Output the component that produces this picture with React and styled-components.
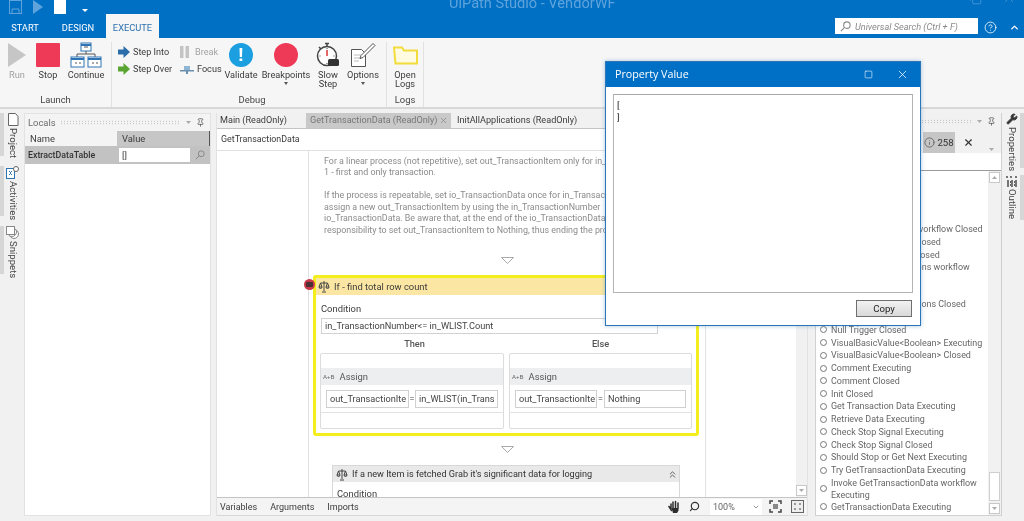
import React from 'react';
import styled, { createGlobalStyle } from 'styled-components';
import { Search, X, Wrench, Pin, ChevronsUp, Info, CircleHelp, ChevronUp, ChevronDown, Minus, Copy, Square } from 'lucide-react';

const Global = createGlobalStyle`
  html, body { margin: 0; padding: 0; background: #f1f1f1; }
  * { box-sizing: border-box; }
  body { font-family: Roboto, "Open Sans", sans-serif; font-size: 9.4px; color: #3c3c3c; }
  svg { flex: none; }
`;

const Page = styled.div`
  position: relative; width: 1024px; height: 521px; overflow: hidden;
  display: flex; flex-direction: column; background: #f1f1f1; filter: blur(0.25px);
`;
const Head = styled.header`background: #0070c4; height: 38px; display: flex; flex-direction: column; flex: none;`;
const TitleRow = styled.div`height: 14px; overflow: hidden; display: flex; align-items: flex-end;`;
const Quick = styled.div`display: flex; align-items: flex-end; height: 14px; width: 449px; flex: none; padding-left: 9px; gap: 11px; margin-top: -6px;`;
const Title = styled.div`font-size: 14.6px; line-height: 18px; height: 14px; margin-top: -6px; color: #5ea3dc; align-self: flex-start; white-space: nowrap;`;
const WinBtns = styled.div`display: flex; gap: 20px; color: #5ea3dc; align-self: flex-start; margin: -9px 8px 0 auto;`;
const TabRow = styled.div`height: 24px; display: flex; align-items: stretch;`;
const HeadTab = styled.div`
  font-size: 9.3px; line-height: 24px; padding-top: 2px; text-align: center; width: ${p => p.$w}px;
  height: 24px; color: ${p => (p.$active ? '#2a70ad' : '#fff')}; background: ${p => (p.$active ? '#f6f6f6' : 'transparent')};
`;
const SearchBox = styled.div`
  margin-left: auto; margin-top: 4px; width: 143px; height: 16px; background: #fff; display: flex; align-items: center; gap: 4px;
  padding-left: 5px; color: #8a8a8a; font-style: italic; font-size: 9.2px; white-space: nowrap;
`;
const HeadTools = styled.div`display: flex; width: 46px; align-items: center; justify-content: space-between; padding: 3px 4px 0 6px; color: #fff; height: 24px;`;

const Ribbon = styled.section`height: 69px; flex: none; background: #f6f6f6; display: flex;`;
const Group = styled.div`
  width: ${p => p.$w}px; display: flex; flex-direction: column; justify-content: space-between;
  border-right: 1px solid #e2e2e2; height: 65px; margin-top: 4px; padding-left: ${p => p.$pl || 0}px;
`;
const GroupRow = styled.div`display: flex; align-items: flex-start; padding-top: 1px;`;
const GroupLabel = styled.div`text-align: center; font-size: 9.4px; line-height: 12px; margin-bottom: 1px; margin-left: ${p => -(p.$pl || 0)}px; color: #444;`;
const Big = styled.div`
  width: ${p => p.$w}px; display: flex; flex-direction: column; align-items: center; text-align: center;
  font-size: 9.2px; line-height: 9px; color: ${p => (p.$off ? '#a2a2a2' : '#3c3c3c')}; white-space: nowrap;
`;
const BigIcon = styled.div`height: 24px; width: 100%; display: flex; justify-content: center; align-items: center; margin-bottom: 3px;`;
const StopIcon = styled.div`width: 24px; height: 24px; background: #ee3a57; border-radius: 1px;`;
const Round = styled.div`width: 24px; height: 24px; border-radius: 50%; background: ${p => p.$c}; color: #fff; font: bold 19px/24px "Liberation Sans", sans-serif; text-align: center;`;
const Caret = styled.div`width: 0; height: 0; border: 2.5px solid transparent; border-top: 3px solid #555; margin-top: 3px;`;
const SmallCol = styled.div`width: ${p => p.$w}px; display: flex; flex-direction: column; gap: 5px; padding-top: 3px;`;
const SmallBtn = styled.div`display: flex; align-items: center; height: 12px; gap: ${p => p.$g ?? 3}px; font-size: 9.1px; white-space: nowrap; color: ${p => (p.$off ? '#a2a2a2' : '#3c3c3c')};`;

const Divider = styled.div`height: 2px; flex: none; background: #d8d8d8;`;
const Workspace = styled.main`flex: 1; display: flex; padding: 4px 0 5px; min-height: 0; background: #f1f1f1;`;
const Rail = styled.aside`width: ${p => p.$w}px; flex: none; display: flex; flex-direction: column; gap: ${p => p.$gap}px;`;
const RailTab = styled.div`
  height: ${p => p.$h}px; width: 100%; display: flex; flex-direction: column; align-items: center;
  ${p => (p.$right ? 'border-right: 4px solid #d6d6d6; padding-left: 2px;' : 'border-left: 4px solid #d6d6d6; padding-right: 3px;')}
  font-size: 9.6px; color: #444; gap: 2px;
`;
const RailText = styled.span`writing-mode: vertical-rl; line-height: 12px; white-space: nowrap;`;

const Locals = styled.section`width: 187px; flex: none; background: #fff; border: 1px solid #e2e2e2; display: flex; flex-direction: column; margin-right: 5px;`;
const PanelHead = styled.div`height: 17px; flex: none; background: ${p => p.$bg || '#f4f4f4'}; display: flex; align-items: center; padding: 0 5px 0 3px; gap: 4px; color: #6b6b6b; font-size: 9.4px;`;
const Grip = styled.div`flex: 1; height: 5px; background-image: radial-gradient(#b4b4b4 0.6px, transparent 0.8px); background-size: 3px 2.5px;`;
const HeadRow = styled.div`display: grid; grid-template-columns: 92px 1fr; height: 15px; line-height: 15px; font-size: 9.4px;`;
const NameHead = styled.div`padding-left: 5px; background: #f4f4f4;`;
const ValueHead = styled.div`padding-left: 5px; background: #c6c6c6; border-right: 1px solid #555; border-bottom: 1px solid #666;`;
const ValueRow = styled.div`display: grid; grid-template-columns: 92px 1fr; height: 18px; background: #c2c2c2;`;
const NameCell = styled.div`padding-left: 3px; line-height: 18px; font-size: 8.8px; color: #333; font-weight: 500;`;
const ValueCell = styled.div`display: flex; align-items: center; padding: 2px 0 2px 2px;`;
const ValueInput = styled.div`width: 71px; height: 14px; background: #fff; padding-left: 3px; line-height: 14px;`;
const ValueSearch = styled.div`flex: 1; display: flex; justify-content: center; color: #888;`;

const Center = styled.section`width: 592px; flex: none; display: flex; flex-direction: column; border-left: 1px solid #e2e2e2; border-right: 1px solid #e2e2e2; margin-right: 7px;`;
const DocTabs = styled.div`height: 16px; flex: none; display: flex; border-bottom: 1px solid #c4c4c4; font-size: 9.1px; line-height: 15px;`;
const DocTab = styled.div`
  width: ${p => p.$w}px; padding-left: ${p => p.$pl}px; display: flex; justify-content: space-between; align-items: center; padding-right: 3px; white-space: nowrap;
  background: ${p => (p.$active ? '#c9c9c9' : 'transparent')}; color: ${p => (p.$active ? '#777' : '#3c3c3c')};
`;
const Crumb = styled.div`height: 22px; flex: none; background: #fff; border-bottom: 1px solid #e0e0e0; padding-left: 4px; line-height: 20px; font-size: 8.9px;`;
const Canvas = styled.div`flex: 1; min-height: 0; display: grid; grid-template-columns: 91px 398px 90px 11px; background: #fff;`;
const Blank = styled.div``;
const Flow = styled.div`border-left: 1px solid #e2e2e2; border-right: 1px solid #e2e2e2; display: flex; flex-direction: column; align-items: flex-start; min-height: 0;`;
const Note = styled.div`padding: 5px 0 0 15px; font-size: 8.9px; line-height: 11.45px; color: #8b8b8b; white-space: nowrap; height: 85px; width: 100%; overflow: hidden; flex: none;`;
const NoteLine = styled.div`min-height: 11.45px;`;
const Arrow = styled.svg`align-self: center; flex: none; display: block; margin: ${p => p.$m};`;
const Yellow = styled.div`
  position: relative; margin-left: 4px; width: 386px; height: 161px; flex: none; border: 3px solid #f4ee1c; border-radius: 3px; background: #fff;
  display: flex; flex-direction: column;
`;
const Badge = styled.div`
  position: absolute; left: -12px; top: 1px; width: 11px; height: 11px; border-radius: 50%; background: #c9394a;
  display: flex; align-items: center; justify-content: center;
  &::after { content: ''; width: 7px; height: 5px; background: #4a3034; border-radius: 1px; }
`;
const YellowHead = styled.div`height: 17px; flex: none; background: #fbe7a3; display: flex; align-items: center; gap: 4px; padding-left: 2px; font-size: 9.4px;`;
const YellowBody = styled.div`padding: 8px 4px 0 4px; display: flex; flex-direction: column;`;
const FieldLabel = styled.div`padding-left: 1px; font-size: 9.4px; line-height: 12px;`;
const CondInput = styled.div`margin: 3px 0 0 1px; width: 337px; height: 16px; border: 1px solid #d2d2d2; padding-left: 3px; line-height: 14px; font-size: 9.2px; color: #444;`;
const BranchHeads = styled.div`display: grid; grid-template-columns: 184px 183px; column-gap: 5px; margin-top: 4px; text-align: center; line-height: 12px; font-size: 9.2px; font-weight: 500; color: #555;`;
const BranchHead = styled.span`padding-left: ${p => p.$pl || 0}px;`;
const Branches = styled.div`display: grid; grid-template-columns: 184px 183px; column-gap: 5px; margin-top: 3px;`;
const Branch = styled.div`height: 76px; border: 1px solid #dcdcdc; border-radius: 2px; padding-top: 14px;`;
const AssignHead = styled.div`height: 17px; background: #eceef0; display: flex; align-items: center; font-size: 9.4px; padding-left: 2px; gap: 5px; color: #555;`;
const Tiny = styled.span`font: 6px "Liberation Sans", sans-serif; color: #666;`;
const AssignRow = styled.div`height: 28px; display: flex; align-items: flex-start; padding: 5px 0 0 5px; border-bottom: 1px solid #e2e2e2;`;
const AssignInput = styled.div`width: ${p => p.$w}px; height: 18px; border: 1px solid #d0d0d0; padding-left: 3px; line-height: 16px; font-size: 9.2px; overflow: hidden; white-space: nowrap; color: #444;`;
const Equal = styled.div`width: ${p => p.$w}px; text-align: center; line-height: 18px; font-size: 9px;`;
const Second = styled.div`margin-left: 23px; width: 348px; flex: none; height: 33px; overflow: hidden; border: 1px solid #d8d8d8; border-bottom: 0; display: flex; flex-direction: column;`;
const SecondHead = styled.div`height: 16px; flex: none; background: #e9e9e9; display: flex; align-items: center; padding-left: 3px; gap: 4px; font-size: 9.15px; color: #333;`;
const SecondChev = styled.div`margin-left: auto; margin-right: 1px; display: flex; color: #555;`;
const SecondBody = styled.div`padding: 6px 0 0 4px; font-size: 9.4px; line-height: 12px;`;

const Bar = styled.div`background: #f1f1f1; display: flex; flex-direction: column; justify-content: space-between; align-items: center; padding: 1px 0;`;
const BarBtn = styled.div`width: 11px; height: 11px; flex: none; background: #fff; border: 1px solid #c8c8c8; display: flex; align-items: center; justify-content: center; color: #999;`;
const Thumb = styled.div`width: 11px; height: 29px; background: #fff; border: 1px solid #cfcfcf; margin-top: auto; margin-bottom: 2px;`;

const BottomBar = styled.div`height: 19px; flex: none; display: flex; align-items: center; background: #f4f4f4; border-top: 1px solid #c4c4c4; border-bottom: 1px solid #d8d8d8; font-size: 9px; padding-right: 3px;`;
const BottomTab = styled.span`margin-left: ${p => p.$ml}px;`;
const ZoomTools = styled.div`margin-left: auto; display: flex; align-items: center; color: #333;`;
const ZoomGlass = styled.span`display: flex; margin-left: 8px; transform: scaleX(-1);`;
const ZoomBox = styled.div`width: 52px; height: 16px; background: #fff; margin: 0 7px 0 10px; padding: 0 2px 0 3px; line-height: 16px; display: flex; justify-content: space-between; align-items: center; color: #666;`;
const ToolGap = styled.span`width: 9px;`;

const Output = styled.section`width: 187px; flex: none; border: 1px solid #d0d0d0; border-top: 0; display: flex; flex-direction: column; background: #f1f1f1;`;
const OutTools = styled.div`height: 21px; margin-top: 2px; display: flex; justify-content: flex-end; align-items: stretch; color: #333; flex: none;`;
const CountTab = styled.div`width: 32px; background: #c6c6c6; display: flex; align-items: center; justify-content: center; gap: 2px; font-size: 9.6px;`;
const CloseTool = styled.div`width: 26px; display: flex; align-items: center; justify-content: center;`;
const GutterTool = styled.div`width: 20px; display: flex; align-items: flex-end; justify-content: center; color: #888; padding-bottom: 1px;`;
const Filter = styled.div`height: 18px; flex: none; background: #fff; border-bottom: 1px solid #9a9a9a;`;
const OutBody = styled.div`flex: 1; min-height: 0; display: grid; grid-template-columns: 1fr 13px; background: #fff;`;
const OutList = styled.div`padding-top: 52px; overflow: hidden;`;
const OutRow = styled.div`display: flex; align-items: center; min-height: 12.75px; gap: 4px; padding-left: 4px; font-size: 8.95px; line-height: 12px; color: #666; white-space: nowrap;`;
const OutWrap = styled.span`white-space: normal; width: 156px;`;
const OutDot = styled.span`width: 7px; height: 7px; flex: none; border-radius: 50%; border: 1px solid #777;`;

const Modal = styled.div`position: absolute; left: 605px; top: 61px; width: 316px; height: 265px; background: #fff; border: 1px solid #2b76b8; box-shadow: 0 0 4px rgba(60,120,180,.45); display: flex; flex-direction: column;`;
const ModalHead = styled.div`height: 25px; flex: none; background: #0070c6; color: #fff; display: flex; align-items: center; padding: 0 0 1px 9px; font-family: "Open Sans", sans-serif; font-size: 10.7px;`;
const ModalBtns = styled.div`margin-left: auto; display: flex; align-items: center; gap: 23px; padding-right: 11px;`;
const ModalArea = styled.div`height: 199px; margin: 7px 7px 0; border: 1px solid #b4b4b4; border-top-color: #a8a8a8; padding: 4px 3px; font-size: 9.5px; line-height: 12px; color: #222; flex: none;`;
const ModalFoot = styled.div`display: flex; justify-content: flex-end; padding: 7px 8px 0 0;`;
const CopyBtn = styled.div`width: 56px; height: 17px; background: linear-gradient(#f2f2f2, #d9d9d9); border: 1px solid #6f6f6f; text-align: center; line-height: 15px; font-size: 9.6px; color: #222;`;

const StepArrow = ({ c }) => (
  <svg width="12" height="12" viewBox="0 0 12 12"><path d="M0 3.5h5.5V0L12 6l-6.5 6V8.5H0z" fill={c} /></svg>
);
const Scales = () => (
  <svg width="12" height="13" viewBox="0 0 12 13" fill="none" stroke="#444" strokeWidth="1">
    <path d="M6 1v10M2.5 3h7M4 12h4" /><path d="M2.5 3 1 7h3zM9.5 3 8 7h3z" />
    <path d="M1 7a1.5 1.5 0 0 0 3 0M8 7a1.5 1.5 0 0 0 3 0" />
  </svg>
);
const Tri = ({ m }) => (
  <Arrow $m={m} width="13" height="7" viewBox="0 0 13 7"><path d="M.5.5h12L6.5 6.5z" fill="#fff" stroke="#aaa" /></Arrow>
);
const ContinueIcon = () => (
  <svg width="32" height="26" viewBox="0 0 32 26" fill="none" stroke="#2e74b5" strokeWidth="1">
    <rect x="11" y="1" width="10" height="8" fill="#fff" /><path d="M11 3h10" strokeWidth="2" />
    <path d="M16 9v3M7 15v-3h18v3" stroke="#555" />
    <rect x="1" y="15" width="13" height="10" fill="#fff" /><path d="M1 17h13" strokeWidth="2" />
    <rect x="18" y="15" width="13" height="10" fill="#fff" /><path d="M18 17h13" strokeWidth="2" />
    <path d="M14 5h4M5 21h2M9 21h2M22 21h2M26 21h2" stroke="#555" />
  </svg>
);
const Stopwatch = () => (
  <svg width="24" height="26" viewBox="0 0 24 26" fill="none" stroke="#444">
    <circle cx="11" cy="14" r="9.5" fill="#fff" strokeWidth="1.5" /><path d="M9 1.5h4M11 2v2.5M3 5l2 2" strokeWidth="1.5" />
    <path d="M11 8v6" stroke="#d33" strokeWidth="1.5" /><path d="M11 6v1M11 21v1M3.5 14h1M17.5 14h1" />
    <rect x="12" y="17" width="11" height="7" rx="1.5" fill="#333" stroke="none" />
  </svg>
);
const OptionsIcon = () => (
  <svg width="26" height="26" viewBox="0 0 26 26" fill="none" stroke="#555">
    <path d="M1.5 7.5h10l4 4v13h-14z" fill="#fff" /><path d="M4 13h7M4 16h7M4 19h5" stroke="#bbb" />
    <path d="M23 1.5l2 2-12 12-3 1 1-3z" fill="#fff" />
  </svg>
);
const FolderIcon = () => (
  <svg width="25" height="20" viewBox="0 0 25 20"><path d="M1 2.5h8l2 3h13v13H2.5z" fill="#fffbe0" stroke="#f2dc3c" strokeWidth="2" /></svg>
);
const DocIcon = () => (
  <svg width="12" height="13" viewBox="0 0 12 13" fill="#fff" stroke="#666"><path d="M1.5.5h7l2.5 3v9h-9.5z" /></svg>
);
const ActIcon = () => (
  <svg width="13" height="13" viewBox="0 0 13 13" fill="#fff"><rect x=".5" y="2.5" width="8" height="10" stroke="#2e74b5" /><path d="M3 5l2 2-2 2M6 5L4 7l2 2" stroke="#2e74b5" fill="none" /><circle cx="10" cy="3" r="2.5" stroke="#666" /></svg>
);
const StackIcon = () => (
  <svg width="13" height="13" viewBox="0 0 13 13" fill="#fff" stroke="#888"><ellipse cx="8" cy="8" rx="4.5" ry="4.5" /><ellipse cx="6" cy="6" rx="4.5" ry="4.5" /><rect x=".5" y=".5" width="8" height="8" /></svg>
);
const OutlineIcon = () => (
  <svg width="12" height="12" viewBox="0 0 12 12" stroke="#333" strokeWidth="1.3"><path d="M1 1v2M5 1v2M10 1v2M2 5v7M6 5v7M10 5v7M4 7h1M4 10h1M8 7h1M8 10h1" /></svg>
);
const HandIcon = () => (
  <svg width="13" height="14" viewBox="0 0 13 14" stroke="#2c2c2c" strokeWidth="1.5" strokeLinecap="round" fill="#2c2c2c">
    <path d="M3 4v5M5 2v6M7.5 1.5v6.5M10 3v5M1 6.5l2.5 4" fill="none" />
    <path d="M3.5 8h7v2.5L9 13H5z" stroke="none" />
  </svg>
);
const FitIcon = () => (
  <svg width="13" height="13" viewBox="0 0 13 13" fill="none" stroke="#444" strokeWidth="1.5"><path d="M1 4V1h3M9 1h3v3M12 9v3H9M4 12H1V9" /><rect x="4" y="4" width="5" height="5" fill="#888" stroke="none" /></svg>
);
const GridIcon = () => (
  <svg width="13" height="13" viewBox="0 0 13 13" fill="#999" stroke="#666"><rect x=".5" y=".5" width="12" height="12" fill="#eee" /><rect x="3" y="3" width="2" height="2" stroke="none" /><rect x="8" y="3" width="2" height="2" stroke="none" /><rect x="3" y="8" width="2" height="2" stroke="none" /><rect x="8" y="8" width="2" height="2" stroke="none" /></svg>
);
const Tick = ({ up }) => (
  <svg width="7" height="5" viewBox="0 0 7 5"><path d={up ? 'M3.5 1 6 4H1z' : 'M3.5 4 6 1H1z'} fill="#aaa" /></svg>
);
const BreakIcon = () => (
  <svg width="10" height="12" viewBox="0 0 10 12" fill="#c4c4c4"><rect width="3.5" height="12" /><rect x="5.5" width="3.5" height="12" /></svg>
);
const FocusIcon = () => (
  <svg width="14" height="9" viewBox="0 0 14 9"><path d="M4 1h6v4H4z" fill="#8fb4d4" /><path d="M0 5h14v1.5H0zM6 6h2v3H6z" fill="#6a8fae" /></svg>
);
const MirrorSearch = ({ size, sw }) => (
  <svg width={size} height={size} viewBox="0 0 12 12" fill="none" stroke="currentColor" strokeWidth={sw}><circle cx="7.5" cy="4.5" r="3.5" /><path d="M5 7 1 11" /></svg>
);

const rowsBefore = [
  'Invoke InitAllSettings workflow Closed',
  'Initialize All Settings Closed',
  'Get App Credentials Closed',
];
const rowsAfter = [
  'Null Trigger Closed', 'VisualBasicValue<Boolean> Executing', 'VisualBasicValue<Boolean> Closed',
  'Comment Executing', 'Comment Closed', 'Init Closed', 'Get Transaction Data Executing', 'Retrieve Data Executing',
  'Check Stop Signal Executing', 'Check Stop Signal Closed', 'Should Stop or Get Next Executing', 'Try GetTransactionData Executing',
];

export default function App() {
  return (
    <Page>
      <Global />
      <Head>
        <TitleRow>
          <Quick>
            <svg width="13" height="14" viewBox="0 0 13 14" fill="none" stroke="#5ea3dc"><rect x=".5" y=".5" width="12" height="13" /><path d="M3 13V9h7v4" /></svg>
            <svg width="10" height="14" viewBox="0 0 10 14"><path d="M0 0l10 7-10 7z" fill="#5ea3dc" /></svg>
            <svg width="12" height="14" viewBox="0 0 12 14"><rect width="12" height="14" fill="#fff" /></svg>
            <svg width="6" height="14" viewBox="0 0 6 14" style={{ marginLeft: 5 }}><path d="M0 9h6l-3 3z" fill="#fff" /></svg>
          </Quick>
          <Title>UiPath Studio - VendorWF</Title>
          <WinBtns>
            <Minus size={14} strokeWidth={1.2} />
            <Copy size={14} strokeWidth={1.2} />
            <X size={14} strokeWidth={1.2} />
          </WinBtns>
        </TitleRow>
        <TabRow>
          <HeadTab $w={50}>START</HeadTab>
          <HeadTab $w={56}>DESIGN</HeadTab>
          <HeadTab $w={53} $active>EXECUTE</HeadTab>
          <SearchBox>
            <MirrorSearch size={11} sw={1.2} />
            Universal Search (Ctrl + F)
          </SearchBox>
          <HeadTools>
            <CircleHelp size={13} strokeWidth={1.5} />
            <ChevronUp size={11} strokeWidth={3} />
          </HeadTools>
        </TabRow>
      </Head>

      <Ribbon>
        <Group $w={112} $pl={4}>
          <GroupRow>
            <Big $w={26} $off>
              <BigIcon><svg width="18" height="24" viewBox="0 0 18 24"><path d="M0 0l18 12L0 24z" fill="#c6c6c6" /></svg></BigIcon>Run
            </Big>
            <Big $w={36}><BigIcon><StopIcon /></BigIcon>Stop</Big>
            <Big $w={40}><BigIcon><ContinueIcon /></BigIcon>Continue</Big>
          </GroupRow>
          <GroupLabel $pl={4}>Launch</GroupLabel>
        </Group>
        <Group $w={275} $pl={6}>
          <GroupRow>
            <SmallCol $w={62}>
              <SmallBtn><StepArrow c="#2a6da8" />Step Into</SmallBtn>
              <SmallBtn><StepArrow c="#5aa532" />Step Over</SmallBtn>
            </SmallCol>
            <SmallCol $w={42}>
              <SmallBtn $off $g={5}><BreakIcon />Break</SmallBtn>
              <SmallBtn><FocusIcon />Focus</SmallBtn>
            </SmallCol>
            <Big $w={38}><BigIcon><Round $c="#1b9fe0">!</Round></BigIcon>Validate</Big>
            <Big $w={52}><BigIcon><Round $c="#ee3a57" /></BigIcon>Breakpoints<Caret /></Big>
            <Big $w={32}><BigIcon><Stopwatch /></BigIcon>Slow<br />Step</Big>
            <Big $w={38}><BigIcon><OptionsIcon /></BigIcon>Options<Caret /></Big>
          </GroupRow>
          <GroupLabel>Debug</GroupLabel>
        </Group>
        <Group $w={37}>
          <GroupRow>
            <Big $w={37}><BigIcon><FolderIcon /></BigIcon>Open<br />Logs</Big>
          </GroupRow>
          <GroupLabel>Logs</GroupLabel>
        </Group>
      </Ribbon>
      <Divider />

      <Workspace>
        <Rail $w={24} $gap={10}>
          <RailTab $h={43}><DocIcon /><RailText>Project</RailText></RailTab>
          <RailTab $h={50}><ActIcon /><RailText>Activities</RailText></RailTab>
          <RailTab $h={48}><StackIcon /><RailText>Snippets</RailText></RailTab>
        </Rail>

        <Locals>
          <PanelHead>
            Locals<Grip />
            <Tick /><Pin size={9} color="#555" />
          </PanelHead>
          <HeadRow><NameHead>Name</NameHead><ValueHead>Value</ValueHead></HeadRow>
          <ValueRow>
            <NameCell>ExtractDataTable</NameCell>
            <ValueCell>
              <ValueInput>[]</ValueInput>
              <ValueSearch><MirrorSearch size={10} sw={1.2} /></ValueSearch>
            </ValueCell>
          </ValueRow>
        </Locals>

        <Center>
          <DocTabs>
            <DocTab $w={89} $pl={3}>Main (ReadOnly)</DocTab>
            <DocTab $w={145} $pl={4} $active>GetTransactionData (ReadOnly)<X size={9} color="#888" /></DocTab>
            <DocTab $w={200} $pl={6}>InitAllApplications (ReadOnly)</DocTab>
          </DocTabs>
          <Crumb>GetTransactionData</Crumb>
          <Canvas>
            <Blank />
            <Flow>
              <Note>
                <NoteLine>For a linear process (not repetitive), set out_TransactionItem only for in_TransactionNumber</NoteLine>
                <NoteLine>1 - first and only transaction.</NoteLine>
                <NoteLine />
                <NoteLine>If the process is repeatable, set io_TransactionData once for in_TransactionNumber</NoteLine>
                <NoteLine>assign a new out_TransactionItem by using the in_TransactionNumber</NoteLine>
                <NoteLine>io_TransactionData. Be aware that, at the end of the io_TransactionData</NoteLine>
                <NoteLine>responsibility to set out_TransactionItem to Nothing, thus ending the process</NoteLine>
              </Note>
              <Tri m="21px 0 11px" />
              <Yellow>
                <Badge />
                <YellowHead><Scales />If - find total row count</YellowHead>
                <YellowBody>
                  <FieldLabel>Condition</FieldLabel>
                  <CondInput>in_TransactionNumber&lt;= in_WLIST.Count</CondInput>
                  <BranchHeads><BranchHead $pl={5}>Then</BranchHead><BranchHead>Else</BranchHead></BranchHeads>
                  <Branches>
                    <Branch>
                      <AssignHead><Tiny>A+B</Tiny>Assign</AssignHead>
                      <AssignRow>
                        <AssignInput $w={83}>out_TransactionIte</AssignInput>
                        <Equal $w={6}>=</Equal>
                        <AssignInput $w={83}>in_WLIST(in_Trans</AssignInput>
                      </AssignRow>
                    </Branch>
                    <Branch>
                      <AssignHead><Tiny>A+B</Tiny>Assign</AssignHead>
                      <AssignRow>
                        <AssignInput $w={82}>out_TransactionIte</AssignInput>
                        <Equal $w={7}>=</Equal>
                        <AssignInput $w={82}>Nothing</AssignInput>
                      </AssignRow>
                    </Branch>
                  </Branches>
                </YellowBody>
              </Yellow>
              <Tri m="10px 0 12px" />
              <Second>
                <SecondHead>
                  <Scales />If a new Item is fetched Grab it's significant data for logging
                  <SecondChev><ChevronsUp size={11} /></SecondChev>
                </SecondHead>
                <SecondBody>Condition</SecondBody>
              </Second>
            </Flow>
            <Blank />
            <Bar>
              <BarBtn><Tick up /></BarBtn>
              <BarBtn><Tick /></BarBtn>
            </Bar>
          </Canvas>
          <BottomBar>
            <BottomTab $ml={3}>Variables</BottomTab>
            <BottomTab $ml={13}>Arguments</BottomTab>
            <BottomTab $ml={13}>Imports</BottomTab>
            <ZoomTools>
              <HandIcon />
              <ZoomGlass><Search size={11} strokeWidth={2.5} /></ZoomGlass>
              <ZoomBox>100%<ChevronDown size={8} /></ZoomBox>
              <FitIcon />
              <ToolGap />
              <GridIcon />
            </ZoomTools>
          </BottomBar>
        </Center>

        <Output>
          <PanelHead $bg="#f1f1f1">
            <Grip /><Tick /><Pin size={9} color="#555" />
          </PanelHead>
          <OutTools>
            <CountTab><Info size={11} color="#666" />258</CountTab>
            <CloseTool><X size={11} strokeWidth={2.5} /></CloseTool>
            <GutterTool><Tick /></GutterTool>
          </OutTools>
          <Filter />
          <OutBody>
            <OutList>
              {rowsBefore.map(t => <OutRow key={t}><OutDot />{t}</OutRow>)}
              <OutRow><OutDot /><OutWrap>Invoke InitAllApplications workflow Executing</OutWrap></OutRow>
              <OutRow><OutDot />Assign Closed</OutRow>
              <OutRow><OutDot />Init All Application Options Closed</OutRow>
              <OutRow><OutDot />Assign Executing</OutRow>
              {rowsAfter.map(t => <OutRow key={t}><OutDot />{t}</OutRow>)}
              <OutRow><OutDot /><OutWrap>Invoke GetTransactionData workflow Executing</OutWrap></OutRow>
              <OutRow><OutDot />GetTransactionData Executing</OutRow>
            </OutList>
            <Bar>
              <BarBtn><Tick up /></BarBtn>
              <Thumb />
              <BarBtn><Tick /></BarBtn>
            </Bar>
          </OutBody>
        </Output>

        <Rail $w={22} $gap={7}>
          <RailTab $h={55} $right><Wrench size={12} fill="#333" /><RailText>Properties</RailText></RailTab>
          <RailTab $h={45} $right><OutlineIcon /><RailText>Outline</RailText></RailTab>
        </Rail>
      </Workspace>

      <Modal>
        <ModalHead>
          Property Value
          <ModalBtns>
            <Square size={9} strokeWidth={1.5} />
            <X size={13} strokeWidth={1.4} />
          </ModalBtns>
        </ModalHead>
        <ModalArea>[<br />]</ModalArea>
        <ModalFoot><CopyBtn>Copy</CopyBtn></ModalFoot>
      </Modal>
    </Page>
  );
}
